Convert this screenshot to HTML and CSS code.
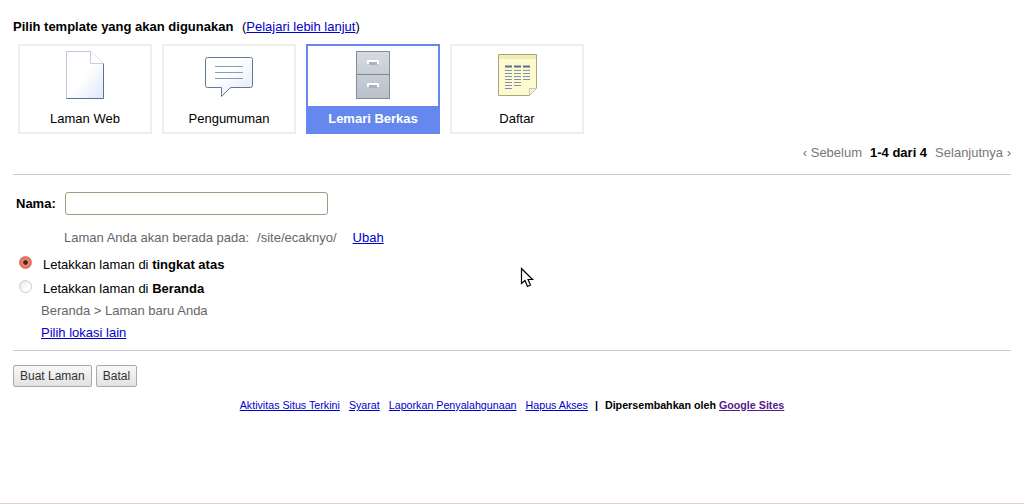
FILE: index.html
```html
<!DOCTYPE html>
<html lang="id">
<head>
<meta charset="utf-8">
<title>Buat Laman</title>
<link rel="stylesheet" href="styles.css">
</head>
<body>
<main class="page">
  <h2 class="heading">Pilih template yang akan digunakan <span class="learn">(<a href="#">Pelajari lebih lanjut</a>)</span></h2>
  <div class="cards">
    <div class="card">
      <div class="card-icon">
        <svg width="38" height="50" viewBox="0 0 38 50">
          <defs><linearGradient id="pg" x1="0" y1="0" x2="1" y2="1"><stop offset=".5" stop-color="#fff"/><stop offset="1" stop-color="#dce7f9"/></linearGradient></defs>
          <path d="M.5.5H24.5L37.5 12.5V47.5H.5Z" fill="url(#pg)" stroke="#b9c6da"/>
          <path d="M.5 47.5H37.5V12.5" fill="none" stroke="#5b7391"/>
          <path d="M24.5.5V12.5H37.5" fill="#fff" stroke="#c4cfdf"/>
        </svg>
      </div>
      <div class="card-label">Laman Web</div>
    </div>
    <div class="card">
      <div class="card-icon">
        <svg width="48" height="42" viewBox="0 0 48 42" class="icon-bubble">
          <defs><linearGradient id="bb" x1="0" y1="0" x2="1" y2="1"><stop offset=".4" stop-color="#fff"/><stop offset="1" stop-color="#dfe8f8"/></linearGradient></defs>
          <path d="M2.5.5H45.5Q47.5.5 47.5 2.5V28.5Q47.5 30.500 45.500 30.500H25.500L16.500 39.500V30.500H2.500Q.5 30.500.5 28.500V2.500Q.5.5 2.5.5Z" fill="url(#bb)" stroke="#5f7896"/>
          <path d="M10 9.500H38M10 15.500H38M10 21.500H38" stroke="#8a9db5" fill="none"/>
        </svg>
      </div>
      <div class="card-label">Pengumuman</div>
    </div>
    <div class="card card-selected">
      <div class="card-icon">
        <svg width="34" height="48" viewBox="0 0 34 48">
          <defs><linearGradient id="cb" x1="0" y1="0" x2="0" y2="1"><stop offset="0" stop-color="#d6dae0"/><stop offset="1" stop-color="#b9c0ca"/></linearGradient></defs>
          <rect x=".5" y=".5" width="33" height="47" fill="url(#cb)" stroke="#858d9b"/>
          <path d="M0 23.500H34" stroke="#7d8694"/>
          <path d="M11 13V10Q11 9 12 9H22Q23 9 23 10V13H21V11H13V13Z" fill="#fff"/>
          <rect x="13" y="11" width="8" height="3" fill="#a3b4c8"/>
          <path d="M11 36V33Q11 32 12 32H22Q23 32 23 33V36H21V34H13V36Z" fill="#fff"/>
          <rect x="13" y="34" width="8" height="3" fill="#a3b4c8"/>
        </svg>
      </div>
      <div class="card-label">Lemari Berkas</div>
    </div>
    <div class="card">
      <div class="card-icon">
        <svg width="39" height="42" viewBox="0 0 39 42" class="icon-list">
          <path d="M.5.5H38.500V34.500L31.500 41.500H.5Z" fill="#fdfacf" stroke="#a9a678"/>
          <rect x="1" y="1" width="37" height="4" fill="#f2edb6"/>
          <path d="M31.500 41.500V34.500H38.500Z" fill="#f2f0d8" stroke="#c9c69d"/>
          <path d="M7 12.500H14M16 12.500H23M25 12.500H32" stroke="#566f8e" stroke-width="2" fill="none"/>
          <path d="M7 16.500H14M16 16.500H23M25 16.500H32M7 19.500H14M16 19.500H23M25 19.500H32M7 22.500H14M16 22.500H23M25 22.500H32M7 25.500H14M16 25.500H23M25 25.500H32M7 28.500H14M16 28.500H23M7 31.500H14M16 31.500H23M7 34.500H14" stroke="#7f93ad" fill="none"/>
        </svg>
      </div>
      <div class="card-label">Daftar</div>
    </div>
  </div>
  <div class="pager"><span>‹ Sebelum</span><b>1-4 dari 4</b><span>Selanjutnya ›</span></div>
  <hr class="rule rule-top">
  <div class="name-row">
    <label class="name-label" for="nama">Nama:</label>
    <input class="name-input" id="nama" type="text">
  </div>
  <div class="url-row"><span>Laman Anda akan berada pada:</span><span>/site/ecaknyo/</span><a href="#">Ubah</a></div>
  <div class="radio-row radio-first"><span class="radio radio-on"></span><span>Letakkan laman di <b>tingkat atas</b></span></div>
  <div class="radio-row"><span class="radio"></span><span>Letakkan laman di <b>Beranda</b></span></div>
  <div class="crumb">Beranda &gt; Laman baru Anda</div>
  <div class="other"><a href="#">Pilih lokasi lain</a></div>
  <hr class="rule rule-bottom">
  <div class="buttons"><button type="button" class="btn">Buat Laman</button><button type="button" class="btn">Batal</button></div>
  <footer class="footer"><a href="#">Aktivitas Situs Terkini</a><a href="#">Syarat</a><a href="#">Laporkan Penyalahgunaan</a><a href="#">Hapus Akses</a><b class="sep">|</b><b>Dipersembahkan oleh <a href="#" class="visited">Google Sites</a></b></footer>
</main>
<div class="edge"></div>
<svg class="cursor" width="14" height="21" viewBox="0 0 14 21"><path d="M1.500 1.500V16.500L5 13.500L7.500 19.500L10.500 18L8 12.500H12.500Z" fill="#fff" stroke="#000" stroke-width="1.200" stroke-linejoin="miter"/></svg>
</body>
</html>
```
FILE: styles.css
```css
html, body { margin: 0; padding: 0; }
body {
  position: relative;
  height: 504px;
  overflow: hidden;
  background: #fff;
  color: #000;
  font: 13px/15px "Liberation Sans", Arial, sans-serif;
  display: flex;
  flex-direction: column;
}
a { color: #00c; text-decoration: underline; }
.page { flex: 1; padding: 19px 13px 0; min-height: 0; }
.heading { margin: 0; font-size: 13px; line-height: 15px; font-weight: bold; }
.learn { font-weight: normal; margin-left: 5px; }
.cards { display: flex; gap: 10px; margin: 10px 0 0 5px; }
.card {
  box-sizing: border-box;
  width: 134px;
  height: 90px;
  border: 2px solid #eee;
  display: flex;
  flex-direction: column;
}
.card-icon { height: 60px; display: flex; justify-content: center; align-items: flex-start; }
.card-icon svg { margin-top: 5px; display: block; }
.card-icon .icon-bubble { margin-top: 11px; }
.card-icon .icon-list { margin-top: 8px; }
.card-label { flex: 1; display: flex; align-items: center; justify-content: center; padding-bottom: 1px; }
.card-selected { border-color: #6687ee; }
.card-selected .card-label { background: #6687ee; color: #fff; font-weight: bold; }
.pager {
  display: flex;
  justify-content: flex-end;
  gap: 8px;
  margin-top: 11px;
  color: #777;
}
.pager b { color: #000; }
.rule { border: 0; height: 1px; background: #ccc; margin: 0; }
.rule-top { margin-top: 14px; }
.name-row { display: flex; align-items: center; margin-top: 17px; }
.name-label { font-weight: bold; margin-left: 3px; width: 49px; }
.name-input {
  box-sizing: border-box;
  width: 263px;
  height: 23px;
  border: 1px solid #a39a7f;
  border-radius: 3px;
  padding: 0 4px;
  margin: 0;
  background: #fff;
}
.url-row { display: flex; margin: 15px 0 0 51px; color: #666; }
.url-row span:first-child { margin-right: 8px; }
.url-row a { margin-left: 16px; }
.radio-row { display: flex; align-items: center; gap: 11px; margin: 9px 0 0 6px; }
.radio-first { margin-top: 12px; }
.radio {
  box-sizing: border-box;
  width: 13px;
  height: 13px;
  border-radius: 50%;
  border: 1px solid #cfcac0;
  background: linear-gradient(135deg, #e9e6df, #fff 70%);
  position: relative;
  top: -2px;
}
.radio-on {
  border-color: #d9705c;
  background: radial-gradient(circle at 50% 50%, #3a2a28 0 2px, #f08a78 2.500px, #e2553f 100%);
}
.crumb { margin: 7px 0 0 28px; color: #666; }
.other { margin: 7px 0 0 28px; }
.rule-bottom { margin-top: 10px; }
.buttons { display: flex; gap: 4px; margin-top: 14px; }
.btn {
  box-sizing: border-box;
  height: 22px;
  padding: 0 6px;
  margin: 0;
  font: 12px "Liberation Sans", Arial, sans-serif;
  color: #333;
  border: 1px solid #aaa;
  border-radius: 2px;
  background: linear-gradient(#f8f8f8, #e2e2e2);
}
.footer {
  display: flex;
  justify-content: center;
  gap: 9px;
  margin-top: 12px;
  font-size: 10.700px;
  line-height: 13px;
}
.footer .sep { margin: 0 -2px 0 -2px; }
.visited { color: #551a8b; }
.edge { height: 1px; background: #ddd6cc; }
.cursor { position: absolute; left: 520px; top: 267px; }
```
